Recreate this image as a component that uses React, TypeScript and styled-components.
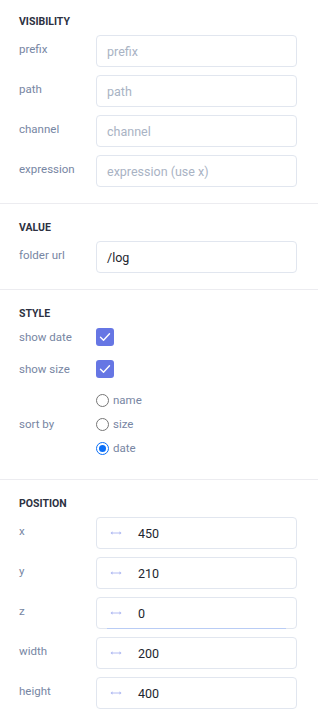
import React from 'react';
import styled, { createGlobalStyle } from 'styled-components';

const GlobalStyle = createGlobalStyle`
  html, body {
    margin: 0;
    padding: 0;
    background: #ffffff;
    font-family: Roboto, "Noto Sans", sans-serif;
  }
`;

const Panel = styled.div`
  width: 318px;
  display: flex;
  flex-direction: column;
`;

const Section = styled.section<{ $last?: boolean; $top?: number; $bottom?: number }>`
  display: flex;
  flex-direction: column;
  gap: 8px;
  padding: ${({ $top }) => $top ?? 18}px 21px ${({ $bottom }) => $bottom ?? 16}px 19px;
  border-bottom: ${({ $last }) => ($last ? 'none' : '1px solid #ececf0')};
`;

const Heading = styled.h3`
  margin: 0 0 -1px;
  font-size: 10.5px;
  font-weight: 700;
  color: #2d3142;
  line-height: 12px;
`;

const Row = styled.div<{ $center?: boolean; $gapTop?: number }>`
  display: grid;
  grid-template-columns: 77px 1fr;
  align-items: ${({ $center }) => ($center ? 'center' : 'start')};
  margin-top: ${({ $gapTop }) => $gapTop ?? 0}px;
`;

const Label = styled.label<{ $pad?: number }>`
  font-size: 11.5px;
  color: #7786a3;
  line-height: 14px;
  padding-top: ${({ $pad }) => $pad ?? 7}px;
`;

const Field = styled.div<{ $active?: boolean }>`
  position: relative;
  height: 30px;
  border: 1px solid #e1e6ef;
  border-radius: 4px;
  display: flex;
  align-items: center;
  padding: 0 10px;
  gap: 16px;
  font-size: 12.5px;
  color: #23262f;

  &::after {
    content: '';
    display: ${({ $active }) => ($active ? 'block' : 'none')};
    position: absolute;
    left: 10px;
    right: 10px;
    bottom: -1px;
    height: 1px;
    background: #b9ccf5;
  }
`;

const Placeholder = styled.span`
  color: #a9b3c4;
`;

const Arrow = styled.svg`
  width: 12px;
  height: 6px;
  flex: none;
  margin-left: 3px;
`;

const Check = styled.span`
  width: 18px;
  height: 18px;
  border-radius: 3px;
  background: #6676e4;
  display: flex;
  align-items: center;
  justify-content: center;
`;

const RadioGroup = styled.div`
  display: flex;
  flex-direction: column;
  gap: 8px;
`;

const RadioItem = styled.div`
  display: flex;
  align-items: center;
  gap: 4px;
  font-size: 11.5px;
  color: #7786a3;
  height: 16px;
`;

const Circle = styled.span<{ $on?: boolean }>`
  box-sizing: border-box;
  width: 13px;
  height: 13px;
  border-radius: 50%;
  border: 1px solid ${({ $on }) => ($on ? '#0b6ff7' : '#767676')};
  display: flex;
  align-items: center;
  justify-content: center;

  &::before {
    content: '';
    display: ${({ $on }) => ($on ? 'block' : 'none')};
    width: 7px;
    height: 7px;
    border-radius: 50%;
    background: #0b6ff7;
  }
`;

const TextField = ({ placeholder, value }: { placeholder?: string; value?: string }) => (
  <Field>{value ? <span>{value}</span> : <Placeholder>{placeholder}</Placeholder>}</Field>
);

const NumberField = ({ value, active }: { value: string; active?: boolean }) => (
  <Field $active={active}>
    <Arrow viewBox='0 0 12 6'>
      <path d='M1 3h10' stroke='#b3bcf2' strokeWidth='1' />
      <path d='M0.5 3l2-1.8v3.6z M11.5 3l-2-1.8v3.6z' fill='#b3bcf2' />
    </Arrow>
    <span>{value}</span>
  </Field>
);

const Checkbox = () => (
  <Check>
    <svg width='12' height='10' viewBox='0 0 12 10'>
      <path d='M1.5 5.2l3 3 6-6.5' fill='none' stroke='#fff' strokeWidth='1.4' strokeLinecap='round' strokeLinejoin='round' />
    </svg>
  </Check>
);

const App = () => (
  <>
    <GlobalStyle />
    <Panel>
      <Section $top={16}>
        <Heading>VISIBILITY</Heading>
        <Row><Label>prefix</Label><TextField placeholder='prefix' /></Row>
        <Row><Label>path</Label><TextField placeholder='path' /></Row>
        <Row><Label>channel</Label><TextField placeholder='channel' /></Row>
        <Row><Label>expression</Label><TextField placeholder='expression (use x)' /></Row>
      </Section>
      <Section>
        <Heading>VALUE</Heading>
        <Row><Label>folder url</Label><TextField value='/log' /></Row>
      </Section>
      <Section $bottom={23}>
        <Heading>STYLE</Heading>
        <Row $center $gapTop={1}><Label $pad={0}>show date</Label><Checkbox /></Row>
        <Row $center $gapTop={6}><Label $pad={0}>show size</Label><Checkbox /></Row>
        <Row $center $gapTop={6}>
          <Label $pad={0}>sort by</Label>
          <RadioGroup>
            <RadioItem><Circle />name</RadioItem>
            <RadioItem><Circle />size</RadioItem>
            <RadioItem><Circle $on />date</RadioItem>
          </RadioGroup>
        </Row>
      </Section>
      <Section $last>
        <Heading>POSITION</Heading>
        <Row><Label>x</Label><NumberField value='450' /></Row>
        <Row><Label>y</Label><NumberField value='210' /></Row>
        <Row><Label>z</Label><NumberField value='0' active /></Row>
        <Row><Label>width</Label><NumberField value='200' /></Row>
        <Row><Label>height</Label><NumberField value='400' /></Row>
      </Section>
    </Panel>
  </>
);

export default App;
